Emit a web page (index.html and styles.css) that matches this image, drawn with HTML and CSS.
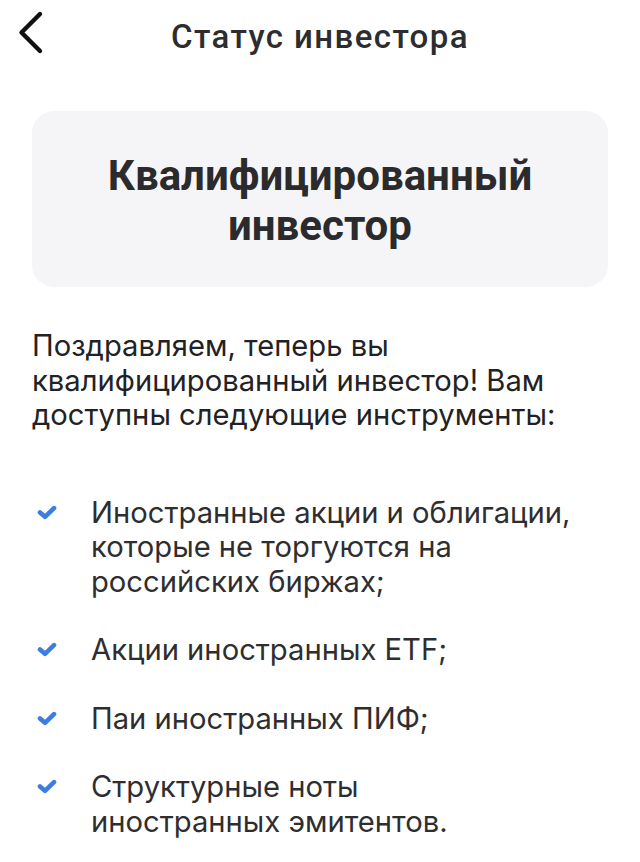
FILE: index.html
```html
<!DOCTYPE html>
<html lang="ru">
<head>
<meta charset="utf-8">
<title>Статус инвестора</title>
<link rel="stylesheet" href="styles.css">
</head>
<body>
  <header class="topbar">
    <button class="back" aria-label="Назад">
      <svg width="28" height="46" viewBox="0 0 28 46">
        <path d="M23 4 L4.5 22.5 L23 41" fill="none" stroke="#111" stroke-width="4.4" stroke-linecap="round" stroke-linejoin="round"/>
      </svg>
    </button>
    <h1 class="title">Статус инвестора</h1>
  </header>

  <main class="content">
    <section class="status-card">
      <h2 class="status-name">Квалифицированный<br>инвестор</h2>
    </section>

    <p class="lead">Поздравляем, теперь вы квалифицированный инвестор! Вам доступны следующие инструменты:</p>

    <ul class="tools">
      <li class="tool">
        <svg class="check" viewBox="0 0 20 15"><path d="M3 7.5 L8 11.8 L17 3.2" fill="none" stroke="#3b7ee0" stroke-width="4.6" stroke-linecap="round" stroke-linejoin="round"/></svg>
        <span>Иностранные акции и облигации, которые не торгуются на российских биржах;</span>
      </li>
      <li class="tool">
        <svg class="check" viewBox="0 0 20 15"><path d="M3 7.5 L8 11.8 L17 3.2" fill="none" stroke="#3b7ee0" stroke-width="4.6" stroke-linecap="round" stroke-linejoin="round"/></svg>
        <span>Акции иностранных ETF;</span>
      </li>
      <li class="tool">
        <svg class="check" viewBox="0 0 20 15"><path d="M3 7.5 L8 11.8 L17 3.2" fill="none" stroke="#3b7ee0" stroke-width="4.6" stroke-linecap="round" stroke-linejoin="round"/></svg>
        <span>Паи иностранных ПИФ;</span>
      </li>
      <li class="tool">
        <svg class="check" viewBox="0 0 20 15"><path d="M3 7.5 L8 11.8 L17 3.2" fill="none" stroke="#3b7ee0" stroke-width="4.6" stroke-linecap="round" stroke-linejoin="round"/></svg>
        <span>Структурные ноты<br>иностранных эмитентов.</span>
      </li>
    </ul>
  </main>
</body>
</html>
```

FILE: styles.css
```css
* { box-sizing: border-box; }

html, body {
  margin: 0;
  padding: 0;
  background: #ffffff;
  color: #2b2b2d;
}

body {
  width: 640px;
  font-family: Inter, "Noto Sans", sans-serif;
}

/* header: back chevron + centered title */
.topbar {
  position: relative;
  height: 72px;
  display: flex;
  align-items: center;
  justify-content: center;
}

.back {
  position: absolute;
  left: 17px;
  top: 10px;
  padding: 0;
  border: 0;
  background: none;
  line-height: 0;
}

.title {
  margin: 0;
  font-family: Roboto, sans-serif;
  font-weight: 500;
  font-size: 33px;
  letter-spacing: 1.4px;
  color: #2d2d2f;
}

.content {
  padding: 39px 32px 0 32px;
}

/* status card */
.status-card {
  background: #f5f5f7;
  border-radius: 22px;
  height: 176px;
  padding-top: 4px;
  display: flex;
  align-items: center;
  justify-content: center;
}

.status-name {
  margin: 0;
  text-align: center;
  font-family: Roboto, sans-serif;
  font-weight: 700;
  font-size: 42px;
  line-height: 50px;
  color: #2b2b2d;
}

.lead {
  margin: 42px 0 0 0;
  font-size: 29.2px;
  line-height: 34.5px;
  font-weight: 400;
  color: #222224;
}

/* list of available instruments */
.tools {
  list-style: none;
  margin: 63px 0 0 0;
  padding: 0;
  display: flex;
  flex-direction: column;
  gap: 34px;
}

.tool {
  display: grid;
  grid-template-columns: 59px 1fr;
  align-items: start;
  font-size: 29.2px;
  line-height: 34.5px;
  color: #2e2e30;
}

.check {
  margin: 9px 0 0 5px;
  width: 20px;
  height: 15px;
}

.tool span {
  max-width: 500px;
}
```
